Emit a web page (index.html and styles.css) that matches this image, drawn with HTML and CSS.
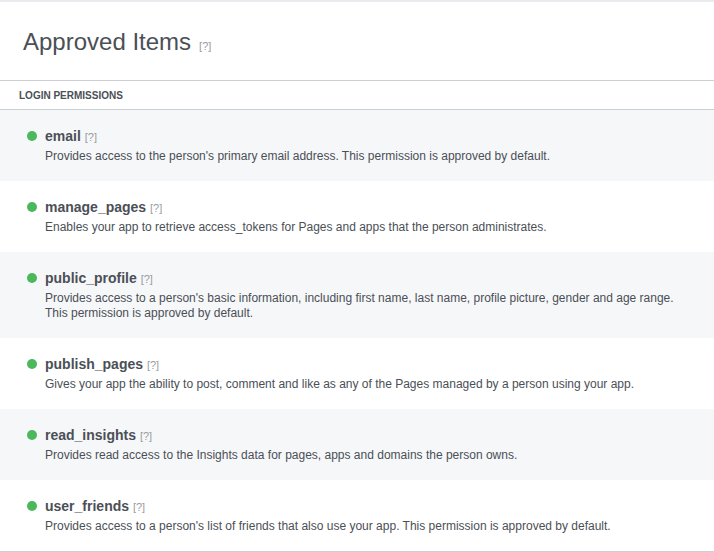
FILE: index.html
```html
<!DOCTYPE html>
<html lang="en">

<head>
  <meta charset="UTF-8">
  <meta name="viewport" content="width=device-width, initial-scale=1.0">
  <title>Approved Items</title>

  <link rel="stylesheet" href="styles.css">
</head>

<body>
  <div class="panel">
    <!-- 상단 제목 -->
    <div class="panel-head">
      <h2>Approved Items</h2>
      <span class="help">[?]</span>
    </div>

    <div class="section-title">LOGIN PERMISSIONS</div>

    <ul class="perm-list">
      <li class="perm">
        <span class="dot"></span>
        <div class="perm-body">
          <p class="perm-name">email <span class="help">[?]</span></p>
          <p class="perm-desc">Provides access to the person's primary email address. This permission is approved by default.</p>
        </div>
      </li>
      <li class="perm">
        <span class="dot"></span>
        <div class="perm-body">
          <p class="perm-name">manage_pages <span class="help">[?]</span></p>
          <p class="perm-desc">Enables your app to retrieve access_tokens for Pages and apps that the person administrates.</p>
        </div>
      </li>
      <li class="perm">
        <span class="dot"></span>
        <div class="perm-body">
          <p class="perm-name">public_profile <span class="help">[?]</span></p>
          <p class="perm-desc">Provides access to a person's basic information, including first name, last name, profile picture, gender and age range.<br>This permission is approved by default.</p>
        </div>
      </li>
      <li class="perm">
        <span class="dot"></span>
        <div class="perm-body">
          <p class="perm-name">publish_pages <span class="help">[?]</span></p>
          <p class="perm-desc">Gives your app the ability to post, comment and like as any of the Pages managed by a person using your app.</p>
        </div>
      </li>
      <li class="perm">
        <span class="dot"></span>
        <div class="perm-body">
          <p class="perm-name">read_insights <span class="help">[?]</span></p>
          <p class="perm-desc">Provides read access to the Insights data for pages, apps and domains the person owns.</p>
        </div>
      </li>
      <li class="perm">
        <span class="dot"></span>
        <div class="perm-body">
          <p class="perm-name">user_friends <span class="help">[?]</span></p>
          <p class="perm-desc">Provides access to a person's list of friends that also use your app. This permission is approved by default.</p>
        </div>
      </li>
    </ul>
  </div>
</body>

</html>
```

FILE: styles.css
```css
* {
  margin: 0;
  padding: 0;
}

body {
  background: #fff;
  font-family: "Liberation Sans", Arial, sans-serif;
  color: #4b4f56;
}

.panel {
  border-top: 2px solid #e9ebee;
  border-bottom: 1px solid #ccd0d5;
}

/* 제목 영역 */
.panel-head {
  display: flex;
  align-items: baseline;
  height: 79px;
  padding: 26px 0 0 23px;
  box-sizing: border-box;
  border-bottom: 1px solid #ccd0d5;
}

.panel-head h2 {
  font-size: 24px;
  font-weight: normal;
  color: #4b4f56;
  line-height: 28px;
}

.panel-head .help {
  font-size: 11px;
  margin-left: 8px;
}

.help {
  color: #999ca2;
  font-weight: normal;
  line-height: 1;
}

.section-title {
  height: 28px;
  line-height: 30px;
  padding-left: 19px;
  font-size: 10px;
  font-weight: bold;
  color: #4b4f56;
  border-bottom: 1px solid #ccd0d5;
}

/* 권한 목록 */
.perm-list {
  list-style: none;
}

.perm {
  display: flex;
  align-items: flex-start;
  height: 71px;
  box-sizing: border-box;
  padding: 17px 0 0 27px;
}

.perm:nth-child(3) {
  height: 86px;
}

.perm:nth-child(odd) {
  background: #f6f7f9;
}

.dot {
  width: 10px;
  height: 10px;
  border-radius: 50%;
  background: #4cb85c;
  margin: 4px 8px 0 0;
  flex: none;
}

.perm-name {
  font-size: 14px;
  font-weight: bold;
  line-height: 18px;
  color: #4b4f56;
}

.perm-name .help {
  font-size: 11px;
}

.perm-desc {
  margin-top: 4px;
  font-size: 12px;
  line-height: 15px;
  color: #4b4f56;
}
```
